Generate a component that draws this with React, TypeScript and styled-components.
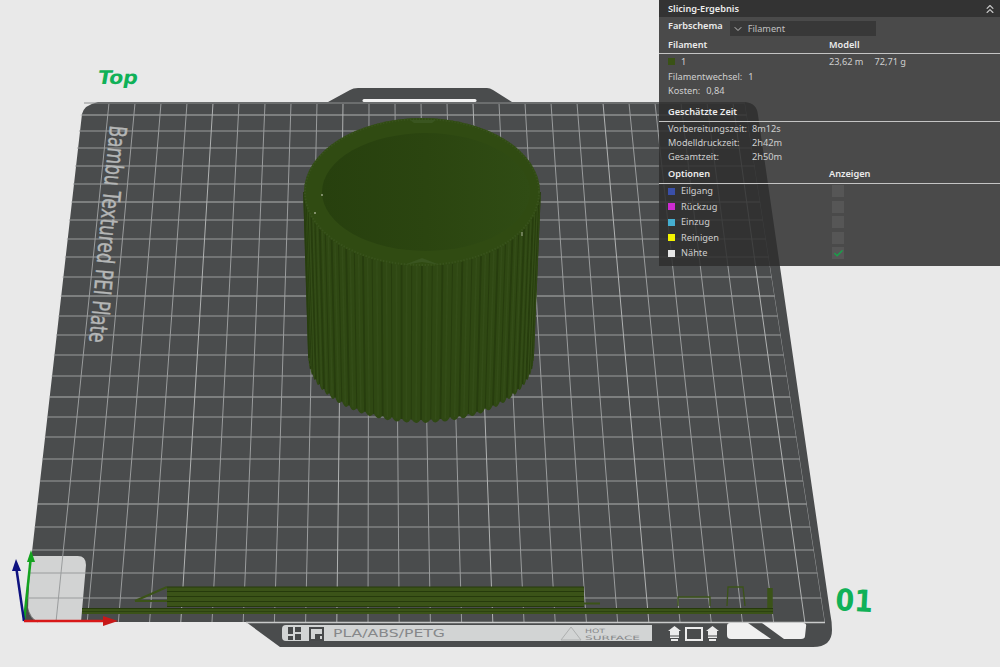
import React from 'react';
import styled, { createGlobalStyle } from 'styled-components';
import { ChevronDown, ChevronsUp, Check } from 'lucide-react';

const GlobalStyle = createGlobalStyle`
  html, body {
    margin: 0;
    padding: 0;
    background: #e9e9e9;
  }
`;

const Page = styled.div`
  position: relative;
  width: 1000px;
  height: 667px;
  overflow: hidden;
  background: #e9e9e9;
  font-family: "Noto Sans", "Liberation Sans", sans-serif;
`;

const Scene = styled.svg`
  display: block;
  width: 1000px;
  height: 667px;
`;

const ViewLabel = styled.text`
  font-family: "DejaVu Sans", sans-serif;
  font-weight: 700;
  fill: #10b158;
`;

const PlateName = styled.text`
  font-family: "DejaVu Sans", sans-serif;
  font-size: 24px;
  fill: #b4b6b6;
  stroke: #b4b6b6;
  stroke-width: 0.4px;
`;

const PlateMark = styled.text<{ $size: number }>`
  font-family: "DejaVu Sans", sans-serif;
  font-size: ${p => p.$size}px;
  fill: #86888a;
`;

const Panel = styled.aside`
  position: absolute;
  top: 0;
  right: 0;
  width: 341px;
  height: 266px;
  background: rgba(46, 46, 46, 0.85);
  color: #cfcfcf;
  font-size: 9.2px;
  line-height: 14px;
`;

const PanelHeader = styled.header`
  display: flex;
  align-items: center;
  justify-content: space-between;
  height: 17px;
  padding: 0 3px 0 9px;
  background: #333333;
  color: #ececec;
  font-weight: 600;
`;

const ColorScheme = styled.div`
  display: flex;
  align-items: flex-start;
  gap: 7px;
  height: 15px;
  margin-top: 4px;
  padding-left: 9px;
  color: #ececec;
  font-weight: 600;
  line-height: 10px;
`;

const Dropdown = styled.div`
  display: flex;
  align-items: center;
  gap: 4px;
  width: 146px;
  height: 15px;
  padding-left: 2px;
  box-sizing: border-box;
  background: #383838;
  color: #c0c0c0;
  font-weight: 400;
  line-height: 15px;
`;

const SectionHead = styled.div<{ $top: number; $pad: number }>`
  display: grid;
  grid-template-columns: 161px 1fr;
  height: 14px;
  margin-top: ${p => p.$top}px;
  padding: 0 0 ${p => p.$pad}px 9px;
  border-bottom: 1px solid #c4c4c4;
  color: #ececec;
  font-weight: 600;
`;

const Row = styled.div`
  display: grid;
  grid-template-columns: 161px 1fr;
  height: 15.5px;
  padding-left: 9px;
  align-items: center;
`;

const KeyValue = styled.div<{ $width?: number }>`
  display: grid;
  grid-template-columns: ${p => (p.$width ? `${p.$width}px` : 'auto')} auto;
  justify-content: start;
  column-gap: 6px;
  height: 14px;
  padding-left: 9px;
`;

const Legend = styled.span`
  display: flex;
  align-items: center;
  gap: 6px;
`;

const Swatch = styled.i<{ $color: string }>`
  display: block;
  width: 7px;
  height: 7px;
  background: ${p => p.$color};
`;

const Box = styled.span`
  display: flex;
  align-items: center;
  justify-content: center;
  width: 12px;
  height: 12px;
  margin-left: 3px;
  background: #565656;
  color: #17a34a;
`;

const Usage = styled.span`
  display: flex;
  gap: 11px;
`;

// horizontal grid lines read off the bed, they widen towards the viewer
const rows = [115, 131, 148, 166, 184, 202, 220, 239, 257, 277, 296, 316, 335, 355, 376, 397, 417, 437, 459, 481, 504, 527, 550, 573, 598];
const cols = Array.from({ length: 25 }, (_, i) => i);

const ribs = 36;
const top = { cx: 422, cy: 192, rx: 118, ry: 74 };
const base = { cx: 421, cy: 358, rx: 112, ry: 62 };

const pt = (e: typeof top, a: number) => [e.cx + e.rx * Math.cos(a), e.cy + e.ry * Math.sin(a)];

const bodyPath = () => {
  let d = `M${top.cx + top.rx} ${top.cy} L${base.cx + base.rx} ${base.cy}`;
  for (let k = 0; k < ribs; k++) {
    const a0 = (Math.PI * k) / ribs;
    const a1 = (Math.PI * (k + 1)) / ribs;
    const [x0, y0] = pt(base, (a0 + a1) / 2);
    const [x1, y1] = pt(base, a1);
    d += ` Q${x0.toFixed(1)} ${(y0 + 7).toFixed(1)} ${x1.toFixed(1)} ${(y1 - 1).toFixed(1)}`;
  }
  return `${d} L${top.cx - top.rx} ${top.cy} Z`;
};

const ribLines = Array.from({ length: ribs + 1 }, (_, k) => {
  const a = (Math.PI * k) / ribs;
  const [x1, y1] = pt(top, a);
  const [x2, y2] = pt(base, a);
  const b = a + Math.PI / ribs / 2;
  const [x3, y3] = pt(top, b);
  const [x4, y4] = pt(base, b);
  return { x1, y1, x2, y2, x3, y3, x4, y4 };
});

const Bed = () => (
  <g>
    <defs>
      <clipPath id="gridArea">
        <path d="M82 104H745L825 622H24Z" />
      </clipPath>
    </defs>
    <path
      d="M82 114Q84 105 98 102H328L350 90Q353 88 358 88H487Q490 88 493 90L512 102H745Q757 103 758 115L830 612Q832 622 832 630Q832 647 813 647H280L246 622H24Z"
      fill="#4a4c4d"
    />
    <path d="M364 100.500H475" stroke="#f2f2f2" strokeWidth="3" strokeLinecap="round" />
    <path d="M84 103H745" stroke="#8d8f90" strokeWidth="1" />
    <path d="M28 610Q29 575 31 556H76Q86 555 86 565L81 622H37Q30 618 28 610Z" fill="#d2d3d3" />
    <g clipPath="url(#gridArea)">
      {rows.map((y, i) => (
        <line key={y} x1="0" x2="860" y1={y} y2={y} stroke={i % 5 === 0 ? '#b0b2b2' : '#9a9c9d'} strokeWidth="1" />
      ))}
      {cols.map(i => (
        <line
          key={i}
          x1={109 + 26 * i}
          y1="103"
          x2={56 + 31.2 * i}
          y2="622"
          stroke={i % 5 === 4 ? '#b0b2b2' : '#9a9c9d'}
          strokeWidth="1"
        />
      ))}
      <line x1="745" y1="103" x2="825" y2="622" stroke="#9a9c9d" strokeWidth="1" />
    </g>
    <path d="M27 606Q30 619 38 622" fill="none" stroke="#555" strokeWidth="0.8" />
    <path d="M246 622.500H825" stroke="#c9caca" strokeWidth="1.600" />
  </g>
);

const PlateFittings = () => (
  <g>
    <path d="M286 625H652V641H286Q282 641 282 637V629Q282 625 286 625Z" fill="#d2d4d4" />
    <path d="M288 627h5v7h-5zM295 627h6v5h-6zM295 634h6v6h-6zM288 636h5v4h-5z" fill="#47494a" />
    <path d="M310 628H323V640H310Z" fill="none" stroke="#47494a" strokeWidth="2" />
    <path d="M315 634h8v2h-3v4h-5z" fill="#47494a" />
    <PlateMark x="333" y="637" $size={10} textLength={112} lengthAdjust="spacingAndGlyphs">PLA/ABS/PETG</PlateMark>
    <path d="M571 627L581 640H561Z" fill="none" stroke="#aeb0b0" strokeWidth="1" />
    <PlateMark x="585" y="633" $size={6} textLength={20} lengthAdjust="spacingAndGlyphs">HOT</PlateMark>
    <PlateMark x="585" y="640" $size={6} textLength={55} lengthAdjust="spacingAndGlyphs">SURFACE</PlateMark>

    <path d="M674.500 626L681 631H679V635.500H670V631H668Z" fill="#ececec" />
    <path d="M670 636.500h9v1.500h-9zM671 639h7v2h-7z" fill="#ececec" />
    <rect x="686" y="628" width="16" height="12" fill="none" stroke="#ececec" strokeWidth="2" />
    <path d="M712.500 626L719 631H717V635.500H708V631H706Z" fill="#ececec" />
    <path d="M708 636.500h9v1.500h-9zM709 639h7v2h-7z" fill="#ececec" />

    <path d="M730 623H748L771 639H731Q727 639 727 635V626Q727 623 730 623Z" fill="#f0f0f0" />
    <path d="M762 623H803Q807 623 806 627L805 636Q805 639 801 639H784Z" fill="#f0f0f0" />
  </g>
);

const PrintedLines = () => (
  <g fill="none">
    <g stroke="#3b5318">
      <path d="M167 589H584M167 594H584M167 599H584M167 604H584" strokeWidth="4" />
      <path d="M135 601L167 587M135 601H167" strokeWidth="2" />
      <path d="M584 603.500H600" strokeWidth="2" />
      <path d="M82 611H773" strokeWidth="6" />
      <path d="M770 588V613" strokeWidth="5.500" />
      <path d="M678 606V597H710V606M727 606L728 587H743L745 606" strokeWidth="1.300" />
    </g>
    <path d="M167 587H584M167 591.500H584M167 596.500H584M167 601.500H584M167 606.500H584M82 608.500H773" stroke="#263a0c" strokeWidth="1" />
    <path d="M82 611.500H773" stroke="#2c4210" strokeWidth="1" />
  </g>
);

const Cylinder = () => (
  <g>
    <defs>
      <linearGradient id="bowl" x1="0" y1="0" x2="1" y2="0">
        <stop offset="0" stopColor="#27400e" />
        <stop offset="0.5" stopColor="#2b4510" />
        <stop offset="1" stopColor="#304c14" />
      </linearGradient>
    </defs>
    <path d={bodyPath()} fill="#2f4813" />
    {ribLines.map((r, i) => (
      <g key={i}>
        <line x1={r.x1} y1={r.y1} x2={r.x2} y2={r.y2} stroke="#273d0e" strokeWidth={i % 2 ? 1 : 1.800} />
        {i < ribs && <line x1={r.x3} y1={r.y3} x2={r.x4} y2={r.y4} stroke="#344d18" strokeWidth="1.500" />}
      </g>
    ))}
    <ellipse cx={top.cx} cy={top.cy} rx={top.rx} ry={top.ry} fill="#304b12" />
    <ellipse
      cx={top.cx}
      cy={top.cy}
      rx={top.rx - 1}
      ry={top.ry - 1}
      fill="none"
      stroke="#38521c"
      strokeWidth="2"
      strokeDasharray="1.500 1.500"
    />
    <ellipse cx="426" cy="192" rx="104" ry="59" fill="url(#bowl)" />
    <path d="M410 120H436L432 123H414Z" fill="#3a5520" />
    <path d="M404 265L422 258L440 265L422 262Z" fill="#3a5520" />
    <circle cx="322" cy="195" r="0.800" fill="#e6e6d8" />
    <circle cx="315" cy="213" r="0.800" fill="#e6e6d8" />
    <path d="M522 232V236" stroke="#c8ccb8" strokeWidth="0.800" />
  </g>
);

const Axes = () => (
  <g fill="none">
    <path d="M24 621L31 556" stroke="#14a31f" strokeWidth="2.500" />
    <path d="M31 550L35 562H27Z" fill="#14a31f" />
    <path d="M24 621L16 566" stroke="#0e1280" strokeWidth="2.500" />
    <path d="M16 559L21 571H12Z" fill="#0e1280" />
    <path d="M24 621H108" stroke="#d81818" strokeWidth="2.500" />
    <path d="M118 621L103 616V626Z" fill="#c81818" />
  </g>
);

const options = [
  { label: 'Eilgang', color: '#3a4fa8', on: false },
  { label: 'Rückzug', color: '#cc2bd0', on: false },
  { label: 'Einzug', color: '#45aed0', on: false },
  { label: 'Reinigen', color: '#f4f400', on: false },
  { label: 'Nähte', color: '#e6e6e6', on: true },
];

const times = [
  ['Vorbereitungszeit:', '8m12s'],
  ['Modelldruckzeit:', '2h42m'],
  ['Gesamtzeit:', '2h50m'],
];

const App: React.FC = () => (
  <Page>
    <GlobalStyle />
    <Scene viewBox="0 0 1000 667">
      <Bed />
      <PlateName transform="translate(110 125) rotate(95.500)" textLength={218} lengthAdjust="spacingAndGlyphs">
        Bambu Textured PEI Plate
      </PlateName>
      <PlateFittings />
      <PrintedLines />
      <Cylinder />
      <Axes />
      <ViewLabel transform="translate(97 84) skewX(-10) scale(1.08 1)" fontSize="19">Top</ViewLabel>
      <ViewLabel transform="translate(835 610) rotate(3) scale(0.9 1)" fontSize="30">01</ViewLabel>
    </Scene>
    <Panel>
      <PanelHeader>
        Slicing-Ergebnis
        <ChevronsUp size={14} color="#c8c8c8" />
      </PanelHeader>
      <ColorScheme>
        Farbschema
        <Dropdown>
          <ChevronDown size={12} />
          Filament
        </Dropdown>
      </ColorScheme>
      <SectionHead $top={2} $pad={1}>
        <span>Filament</span>
        <span>Modell</span>
      </SectionHead>
      <Row>
        <Legend>
          <Swatch $color="#3a5216" />1
        </Legend>
        <Usage>
          <span>23,62 m</span>
          <span>72,71 g</span>
        </Usage>
      </Row>
      <KeyValue>
        <span>Filamentwechsel:</span>
        <span>1</span>
      </KeyValue>
      <KeyValue>
        <span>Kosten:</span>
        <span>0,84</span>
      </KeyValue>
      <SectionHead $top={7} $pad={2}>
        <span>Geschätzte Zeit</span>
      </SectionHead>
      {times.map(([k, v]) => (
        <KeyValue key={k} $width={78}>
          <span>{k}</span>
          <span>{v}</span>
        </KeyValue>
      ))}
      <SectionHead $top={3} $pad={2}>
        <span>Optionen</span>
        <span>Anzeigen</span>
      </SectionHead>
      {options.map(o => (
        <Row key={o.label}>
          <Legend>
            <Swatch $color={o.color} />
            {o.label}
          </Legend>
          <Box>{o.on && <Check size={11} strokeWidth={3} />}</Box>
        </Row>
      ))}
    </Panel>
  </Page>
);

export default App;
